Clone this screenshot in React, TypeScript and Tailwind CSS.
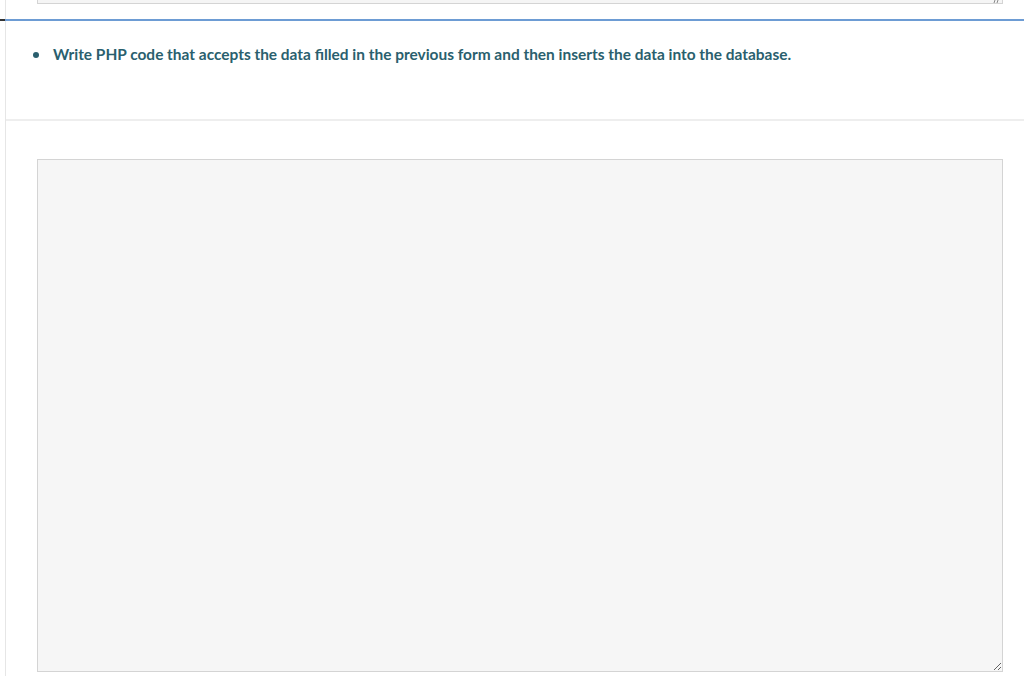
import React from "react";

export default function App() {
  return (
    <div className="w-[1024px] h-[676px] overflow-hidden bg-white relative" style={{ fontFamily: "Lato, 'Open Sans', sans-serif" }}>
      {/* top remnant of previous textarea */}
      <div className="ml-[5px] border-l border-[#e6e6e6] h-[19px] pl-[31px]">
        <div className="w-[966px] h-[4px] bg-[#f5f5f5] border border-t-0 border-[#d4d4d4] relative">
          <svg className="absolute right-[3px] bottom-[0px]" width="6" height="3" viewBox="0 0 6 3">
            <path d="M1 3 L2 0 M4 3 L5 0" stroke="#888" strokeWidth="1" />
          </svg>
        </div>
      </div>
      {/* blue separator */}
      <div className="flex h-[2px]">
        <div className="w-[5px] bg-[#333]" />
        <div className="flex-1 bg-[#6d9cd4]" />
      </div>
      <div className="ml-[5px] border-l border-[#e6e6e6] h-[655px]">
        <div className="h-[98px] pt-[23px] pl-[27px] flex items-start">
          <span className="w-[6px] h-[6px] rounded-full bg-[#2a5f6e] mt-[8px] mr-[14px] shrink-0" />
          <span className="text-[15.45px] leading-[20px] font-bold text-[#2a5f6e] whitespace-nowrap">
            Write PHP code that accepts the data filled in the previous form and then inserts the data into the database.
          </span>
        </div>
        <div className="h-[2px] bg-[#eeeeee]" />
        <div className="pt-[38px] pl-[31px]">
          <textarea
            readOnly
            className="block w-[966px] h-[513px] bg-[#f6f6f6] border border-[#d4d4d4] outline-none resize"
          />
        </div>
      </div>
    </div>
  );
}
